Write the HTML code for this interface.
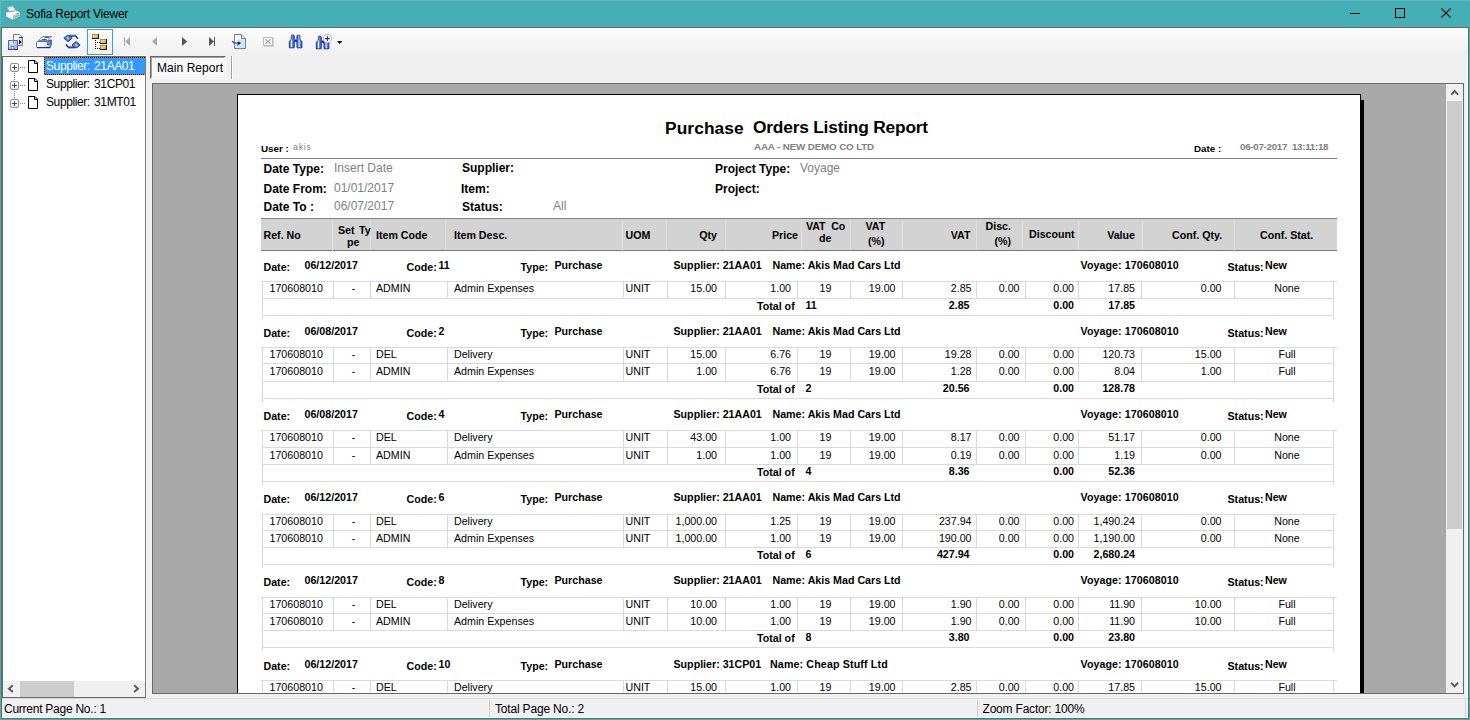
<!DOCTYPE html>
<html>
<head>
<meta charset="utf-8">
<title>Sofia Report Viewer</title>
<style>
*{box-sizing:border-box;margin:0;padding:0}
html,body{width:1470px;height:720px;overflow:hidden}
body{position:relative;background:#44b0b5;font-family:"Liberation Sans",sans-serif;font-size:12px;color:#000}
.abs{position:absolute}
.ui{font-size:12px;line-height:14px;white-space:nowrap}
#titletext{position:absolute;left:26px;top:7px;font-size:12px;line-height:14px;white-space:nowrap;letter-spacing:-0.23px}
#client{position:absolute;left:1px;top:27px;width:1468px;height:692px;background:#f0f0f0;border:1px solid #696969}
#toolbar{position:absolute;left:2px;top:28px;width:1466px;height:28px;background:linear-gradient(#ffffff 0px,#ffffff 1px,#fbfbfb 1px,#f8f8f8 10px,#f1f1f1 24px,#f0f0f0 28px)}
#tree{position:absolute;left:2px;top:56px;width:144px;height:642px;background:#fff;border:1px solid #696969;border-right-color:#7a7a7a}
.tr{position:absolute;left:44px;height:18px;line-height:17px;font-size:12px;white-space:nowrap;padding-left:2px}
#viewer{position:absolute;left:152px;top:83px;width:1312px;height:611px;background:#a9a9a9;border:1px solid #696969;overflow:hidden}
#paper{position:absolute;left:237px;top:94px;width:1124px;height:640px;background:#fff;border:1px solid #000}
#clip{position:absolute;left:0;top:0;width:1470px;height:693px;overflow:hidden}
.t{position:absolute;white-space:nowrap;font-size:10.67px;line-height:14px;height:14px}
.b{font-weight:bold}
.g{color:#808080}
.hl{position:absolute;height:1px;background:#d9d9d9}
.vl{position:absolute;width:1px;background:#d9d9d9}
.f12{font-size:12px}
.hs{position:absolute;top:221px;width:1px;height:29px;background:#e0e0e0}
#status{position:absolute;left:2px;top:698px;width:1466px;height:20px;background:#f0f0f0;font-size:12px}
#status span{position:absolute;top:4px;line-height:14px;white-space:nowrap}
</style>
</head>
<body>
<!-- title bar -->
<div id="titletext">Sofia Report Viewer</div>
<!--TITLEICONS-->
<div class="abs" style="left:0;top:0;width:1470px;height:1px;background:#5cb9bd"></div>
<div class="abs" style="left:0;top:0;width:1px;height:27px;background:#5cb9bd"></div>
<svg class="abs" style="left:4px;top:4px" width="18" height="18" viewBox="0 0 18 18">
 <polygon points="3.6,3.4 8.8,2.2 11.4,6.6 5.8,8" fill="#e9f1fb" stroke="#c8d4e0" stroke-width="0.5"/>
 <polygon points="2.4,8.8 5.4,8.0 11.6,6.6 15.6,8.6 15.6,12.2 9,15.6 2.4,12.6" fill="#e4e4e4"/>
 <polygon points="2.4,8.8 11.6,6.6 15.6,8.6 9,11.4" fill="#f6f6f6"/>
 <polygon points="9,11.4 15.6,8.6 15.6,12.2 9,15.6" fill="#c2c2c2"/><polygon points="9,13.6 15.6,10.6 15.6,11.4 9,14.4" fill="#a8a8a8"/>
 <polygon points="2.4,8.8 9,11.4 9,15.6 2.4,12.6" fill="#fbfbfb"/>
 <polygon points="4.5,7.6 10.8,6.2 11.6,7 5.8,8.6" fill="#9aa3ad"/>
 <rect x="12.6" y="8.8" width="1.8" height="1.1" fill="#3dbb2f"/>
</svg>
<svg class="abs" style="left:1340px;top:0" width="130" height="27" viewBox="0 0 130 27">
 <rect x="10" y="13" width="10" height="1" fill="#000"/>
 <rect x="55.5" y="8.5" width="9" height="9" fill="none" stroke="#000" stroke-width="1"/>
 <path d="M101.3 8.3 L110.7 17.7 M110.7 8.3 L101.3 17.7" stroke="#000" stroke-width="1.1" fill="none"/>
</svg>
<!--/TITLEICONS-->
<div id="client"></div>
<div id="toolbar"></div>
<div class="abs" style="left:1467px;top:54px;width:1px;height:664px;background:#fff"></div>
<!--TOOLICONS-->
<div class="abs" style="left:87px;top:29px;width:26px;height:26px;border:1px solid #3399ff;background:rgba(255,255,255,0.35)"></div>
<svg class="abs" style="left:0;top:28px" width="360" height="28" viewBox="0 28 360 28">
<defs>
 <linearGradient id="fg" x1="0" y1="0" x2="1" y2="1"><stop offset="0" stop-color="#ffe070"/><stop offset="0.5" stop-color="#ffc438"/><stop offset="1" stop-color="#f08c18"/></linearGradient>
 <linearGradient id="bl" x1="0" y1="0" x2="1" y2="0"><stop offset="0" stop-color="#3b6fc4"/><stop offset="0.28" stop-color="#5e9ad8"/><stop offset="0.45" stop-color="#eef5ff"/><stop offset="0.62" stop-color="#5a96d6"/><stop offset="1" stop-color="#2f66b8"/></linearGradient>
 <linearGradient id="fl" x1="0" y1="0" x2="1" y2="1"><stop offset="0" stop-color="#b9dcfb"/><stop offset="0.6" stop-color="#9cc4f4"/><stop offset="1" stop-color="#86aeea"/></linearGradient>
 <linearGradient id="pb" x1="0" y1="0" x2="1" y2="0"><stop offset="0" stop-color="#ffffff"/><stop offset="0.6" stop-color="#e6f0ff"/><stop offset="1" stop-color="#7fb0f0"/></linearGradient>
</defs>
<!-- 1: export -->
<path d="M13.5 34.5 H19.5 L22.5 37.5 V45.5 H13.5 Z" fill="#fff" stroke="#7a7a7a" stroke-width="1"/>
<rect x="19" y="38" width="3" height="7" fill="#bfe3ff"/>
<rect x="19" y="37" width="4" height="1" fill="#1b2f8f"/>
<path d="M19 39.5 L21.6 42 L19 44.5 Z" fill="#000"/>
<rect x="8.5" y="40.5" width="9" height="9" fill="url(#fl)" stroke="#4668d0" stroke-width="1"/>
<rect x="8" y="49" width="10" height="1" fill="#2a2a9a"/>
<rect x="10.6" y="41" width="4" height="3.6" fill="#f6f6f6"/><rect x="12.8" y="41" width="1.2" height="2.8" fill="#8a8a8a"/>
<rect x="11.4" y="46.6" width="2.4" height="2.6" fill="#fff" stroke="#555" stroke-width="0.6"/>
<!-- 2: print -->
<path d="M42.5 36.5 H52 L47.5 40.5 H38.5 Z" fill="#fff" stroke="#8a8a8a" stroke-width="1"/>
<rect x="44.5" y="37" width="4.5" height="1" fill="#3b46c2"/><rect x="42" y="39" width="4.8" height="1" fill="#3b46c2"/>
<path d="M47.6 40.5 L51.8 39.6 V45 L50 47.4 Z" fill="#2f55c8"/>
<rect x="36.5" y="41.5" width="14" height="6" rx="1" fill="url(#pb)" stroke="#3f6fd8" stroke-width="1"/>
<rect x="37" y="47" width="13.4" height="1.2" fill="#2626a0"/>
<rect x="47" y="42" width="2.6" height="1.6" fill="#18d818"/><rect x="47" y="43.6" width="2.6" height="1.4" fill="#f02020"/>
<!-- 3: refresh -->
<path d="M78 38.7 L75.6 35.9 H69" stroke="#25259a" stroke-width="1.5" fill="none"/>
<path d="M76.2 35 H68.6" stroke="#4f9be0" stroke-width="0.8" fill="none"/>
<path d="M63.9 38.2 L67.2 35.5 L70.4 36.2 L72 38.3 L68 41.7 Z" fill="#4a86cc" stroke="#25259a" stroke-width="0.9"/>
<path d="M66.2 37.6 L68 36.6 L69.4 38.4 L67.8 39.6 Z" fill="#a8cdf0"/>
<path d="M66 44.5 L68.4 47.3 H75" stroke="#25259a" stroke-width="1.5" fill="none"/>
<path d="M67.8 48.2 H75.4" stroke="#4f9be0" stroke-width="0.8" fill="none"/>
<path d="M80.1 45 L76.8 47.7 L73.6 47 L72 44.9 L76 41.5 Z" fill="#4a86cc" stroke="#25259a" stroke-width="0.9"/>
<path d="M77.8 45.6 L76 46.6 L74.6 44.8 L76.2 43.6 Z" fill="#a8cdf0"/>
<!-- 4: tree -->
<rect x="92" y="34" width="7" height="5" fill="#141414"/><rect x="92" y="34" width="6" height="1" fill="#8c8c8c"/><rect x="92" y="34" width="1" height="4" fill="#8c8c8c"/><rect x="93" y="35" width="5" height="3" fill="url(#fg)"/><rect x="100" y="39" width="7" height="5" fill="#141414"/><rect x="100" y="39" width="6" height="1" fill="#8c8c8c"/><rect x="100" y="39" width="1" height="4" fill="#8c8c8c"/><rect x="101" y="40" width="5" height="3" fill="url(#fg)"/><rect x="100" y="45" width="7" height="5" fill="#141414"/><rect x="100" y="45" width="6" height="1" fill="#8c8c8c"/><rect x="100" y="45" width="1" height="4" fill="#8c8c8c"/><rect x="101" y="46" width="5" height="3" fill="url(#fg)"/>
<rect x="95" y="40" width="1" height="1" fill="#000"/><rect x="95" y="42" width="1" height="1" fill="#000"/><rect x="95" y="44" width="1" height="1" fill="#000"/><rect x="95" y="46" width="1" height="1" fill="#000"/><rect x="95" y="48" width="1" height="1" fill="#000"/><rect x="97" y="42" width="1" height="1" fill="#000"/><rect x="97" y="48" width="1" height="1" fill="#000"/><rect x="99" y="42" width="1" height="1" fill="#000"/><rect x="99" y="48" width="1" height="1" fill="#000"/>
<!-- nav -->
<rect x="124" y="37" width="1" height="9" fill="#a9a9a9"/><path d="M130 37 V46 L125.2 41.5 Z" fill="#a9a9a9"/>
<path d="M157 37 V46 L152 41.5 Z" fill="#a9a9a9"/>
<path d="M182 37 V46 L187.2 41.5 Z" fill="#555"/>
<path d="M209 37 V46 L214 41.5 Z" fill="#555"/><rect x="214" y="37" width="1" height="9" fill="#555"/>
<!-- goto page -->
<path d="M234.5 34.5 H241.5 L245.5 38.5 V48.5 H234.5 Z" fill="#c9e9ff" stroke="#7d7d7d" stroke-width="1"/>
<path d="M235 35 H241 V39 H238 V42 H235 Z" fill="#fff"/>
<path d="M241.5 34.5 V38.5 H245.5" fill="#d9f0ff" stroke="#7d7d7d" stroke-width="1"/>
<path d="M232.2 41 C233.2 43.4 236 43.2 238 43" stroke="#4a4ab8" stroke-width="1.4" fill="none"/>
<path d="M237.4 40.6 L241.2 43 L237 46 L238 43.4 Z" fill="#1e1e90"/>
<path d="M236.5 42 L238.5 40.2 L240 42" fill="#fff" stroke="#9aa0e0" stroke-width="0.6"/>
<!-- disabled close -->
<rect x="263.5" y="37.5" width="9" height="8" fill="#f2f2f2" stroke="#bdbdbd" stroke-width="1"/>
<path d="M264 46.5 H273.5 V38" stroke="#d0d0d0" stroke-width="1" fill="none"/>
<path d="M265.4 39.4 L270.6 43.6 M270.6 39.4 L265.4 43.6" stroke="#a6a6a6" stroke-width="1.2"/>
<!-- binoculars 1 -->
<path d="M291.3 36.2 C291.3 34.6 294.3 34.6 294.3 36.2 V39.2 L294.2 47.8 H289.3 V41.4 L291.3 39.2 Z" fill="url(#bl)" stroke="#2424a0" stroke-width="0.9"/>
<path d="M296.9 36.2 C296.9 34.6 299.9 34.6 299.9 36.2 V39.2 L301.9 41.4 V47.8 H297 L296.9 39.2 Z" fill="url(#bl)" stroke="#2424a0" stroke-width="0.9"/>
<path d="M294.3 40.2 L295.6 39.2 L296.9 40.2 V42.8 L295.6 41.8 L294.3 42.8 Z" fill="#2a2aa8"/>
<!-- binoculars 2 -->
<path d="M318.3 37.2 C318.3 35.6 321.3 35.6 321.3 37.2 V40.2 L321.2 48.8 H316.3 V42.4 L318.3 40.2 Z" fill="url(#bl)" stroke="#2424a0" stroke-width="0.9"/>
<path d="M323.9 40.2 L324 48.8 H328.9 V42.4 L326.9 40.2 Z" fill="url(#bl)" stroke="#2424a0" stroke-width="0.9"/>
<path d="M321.3 41.2 L322.6 40.2 L323.9 41.2 V43.8 L322.6 42.8 L321.3 43.8 Z" fill="#2a2aa8"/>
<circle cx="327.4" cy="38.6" r="4.1" fill="#fff" stroke="#a4a4a4" stroke-width="0.9"/>
<path d="M325 38.6 H329.8 M327.4 36.2 V41" stroke="#2a2aa8" stroke-width="1.1"/>
<path d="M337 41 H342.4 L339.7 44 Z" fill="#000"/>
</svg>
<!--/TOOLICONS-->
<div class="abs" style="left:2px;top:55px;width:144px;height:1px;background:#fbfbfb"></div>
<div id="tree"></div>
<!--TREE--><div class="abs" style="left:10px;top:63px;width:9px;height:9px;border:1px solid #919191;border-radius:2px;background:linear-gradient(#fff,#fff 50%,#e3e3e3)"></div><div class="abs" style="left:12px;top:67px;width:5px;height:1px;background:#2a4a9e"></div><div class="abs" style="left:14px;top:65px;width:1px;height:5px;background:#2a4a9e"></div><div class="abs" style="left:20px;top:67px;width:1px;height:1px;background:#808080"></div><div class="abs" style="left:22px;top:67px;width:1px;height:1px;background:#808080"></div><div class="abs" style="left:24px;top:67px;width:1px;height:1px;background:#808080"></div><svg class="abs" style="left:27px;top:59px" width="13" height="15" viewBox="0 0 13 15"><path d="M1.5 1.5 H8 L10.5 4 V13.5 H1.5 Z" fill="#fff" stroke="#000" stroke-width="1"/><path d="M7.5 1.5 V4.5 H10.5" fill="none" stroke="#000" stroke-width="1"/></svg><div class="abs" style="left:44px;top:57px;width:101px;height:18px;background:#3399ff"></div><div class="abs" style="left:44px;top:57px;width:101px;height:1px;background:repeating-linear-gradient(90deg,#101010 0 1px,#e8800a 1px 2px)"></div><div class="abs" style="left:44px;top:74px;width:101px;height:1px;background:repeating-linear-gradient(90deg,#e8800a 0 1px,#101010 1px 2px)"></div><div class="abs" style="left:44px;top:57px;width:1px;height:18px;background:repeating-linear-gradient(180deg,#101010 0 1px,#e8800a 1px 2px)"></div><span class="abs ui" style="left:46px;top:59px;color:#fff;letter-spacing:-0.4px;word-spacing:1.4px">Supplier: 21AA01</span><div class="abs" style="left:10px;top:81px;width:9px;height:9px;border:1px solid #919191;border-radius:2px;background:linear-gradient(#fff,#fff 50%,#e3e3e3)"></div><div class="abs" style="left:12px;top:85px;width:5px;height:1px;background:#2a4a9e"></div><div class="abs" style="left:14px;top:83px;width:1px;height:5px;background:#2a4a9e"></div><div class="abs" style="left:20px;top:85px;width:1px;height:1px;background:#808080"></div><div class="abs" style="left:22px;top:85px;width:1px;height:1px;background:#808080"></div><div class="abs" style="left:24px;top:85px;width:1px;height:1px;background:#808080"></div><div class="abs" style="left:14px;top:73px;width:1px;height:1px;background:#808080"></div><div class="abs" style="left:14px;top:75px;width:1px;height:1px;background:#808080"></div><div class="abs" style="left:14px;top:77px;width:1px;height:1px;background:#808080"></div><div class="abs" style="left:14px;top:79px;width:1px;height:1px;background:#808080"></div><svg class="abs" style="left:27px;top:77px" width="13" height="15" viewBox="0 0 13 15"><path d="M1.5 1.5 H8 L10.5 4 V13.5 H1.5 Z" fill="#fff" stroke="#000" stroke-width="1"/><path d="M7.5 1.5 V4.5 H10.5" fill="none" stroke="#000" stroke-width="1"/></svg><span class="abs ui" style="left:46px;top:77px;letter-spacing:-0.4px;word-spacing:1.4px">Supplier: 31CP01</span><div class="abs" style="left:10px;top:99px;width:9px;height:9px;border:1px solid #919191;border-radius:2px;background:linear-gradient(#fff,#fff 50%,#e3e3e3)"></div><div class="abs" style="left:12px;top:103px;width:5px;height:1px;background:#2a4a9e"></div><div class="abs" style="left:14px;top:101px;width:1px;height:5px;background:#2a4a9e"></div><div class="abs" style="left:20px;top:103px;width:1px;height:1px;background:#808080"></div><div class="abs" style="left:22px;top:103px;width:1px;height:1px;background:#808080"></div><div class="abs" style="left:24px;top:103px;width:1px;height:1px;background:#808080"></div><div class="abs" style="left:14px;top:91px;width:1px;height:1px;background:#808080"></div><div class="abs" style="left:14px;top:93px;width:1px;height:1px;background:#808080"></div><div class="abs" style="left:14px;top:95px;width:1px;height:1px;background:#808080"></div><div class="abs" style="left:14px;top:97px;width:1px;height:1px;background:#808080"></div><svg class="abs" style="left:27px;top:95px" width="13" height="15" viewBox="0 0 13 15"><path d="M1.5 1.5 H8 L10.5 4 V13.5 H1.5 Z" fill="#fff" stroke="#000" stroke-width="1"/><path d="M7.5 1.5 V4.5 H10.5" fill="none" stroke="#000" stroke-width="1"/></svg><span class="abs ui" style="left:46px;top:95px;letter-spacing:-0.4px;word-spacing:1.4px">Supplier: 31MT01</span>
<div class="abs" style="left:3px;top:681px;width:142px;height:16px;background:#f0f0f0"></div>
<div class="abs" style="left:20px;top:681px;width:54px;height:16px;background:#cdcdcd"></div>
<svg class="abs" style="left:3px;top:681px" width="142" height="16" viewBox="0 0 142 16"><path d="M9.8 4.3 L6 7.7 L9.8 11.1" stroke="#5c5c5c" stroke-width="2" fill="none"/><path d="M131.2 4.3 L135 7.7 L131.2 11.1" stroke="#5c5c5c" stroke-width="2" fill="none"/></svg>
<!--/TREE-->
<!--TAB-->
<div class="abs" style="left:150px;top:56px;width:76px;height:23px;border:1px solid;border-color:#696969 #fff #fff #696969;background-color:#f8f8f8"></div>
<div class="abs" style="left:151px;top:57px;width:74px;height:21px;border:1px solid;border-color:#a0a0a0 #f0f0f0 #f0f0f0 #a0a0a0"></div>
<span class="abs ui" style="left:157px;top:61px;letter-spacing:0.06px">Main Report</span>
<div class="abs" style="left:231px;top:56px;width:1px;height:23px;background:#a0a0a0"></div>
<div class="abs" style="left:232px;top:56px;width:1px;height:23px;background:#fff"></div>
<!--/TAB-->
<div id="viewer"></div>
<div id="clip">
<div id="paper"></div>
<div class="abs" style="left:1361px;top:100px;width:3px;height:640px;background:#000"></div>
<!--REPORTHEAD-->
<!-- report head -->
<span class="t b" style="left:665px;top:117px;font-size:17.33px;line-height:22px;height:22px;letter-spacing:0.1px" id="ttl1">Purchase</span>
<span class="t b" style="left:753px;top:116px;font-size:17.33px;line-height:22px;height:22px;letter-spacing:-0.2px" id="ttl2">Orders Listing Report</span>
<span class="t b g" style="left:754px;top:140px;font-size:9.8px;letter-spacing:-0.14px" id="co">AAA - NEW DEMO CO LTD</span>
<span class="t b" style="left:261px;top:142px;font-size:9.8px;letter-spacing:0px" id="usr">User :</span>
<span class="t g" style="left:293px;top:140px;font-size:8.8px;letter-spacing:0.75px" id="akis">akis</span>
<span class="t b" style="left:1194px;top:142px;font-size:9.8px;letter-spacing:0px" id="dtl">Date :</span>
<span class="t b g" style="left:1240px;top:140px;font-size:9.8px;letter-spacing:-0.3px" id="dtv">06-07-2017&nbsp;&nbsp;13:11:18</span>
<div class="abs" style="left:261px;top:158px;width:1076px;height:1px;background:#808080"></div>

<span class="t b f12" style="left:263.5px;top:162px" id="f1">Date Type:</span>
<span class="t g f12" style="left:334px;top:161px" id="f1v">Insert Date</span>
<span class="t b f12" style="left:263.5px;top:182px" id="f2">Date From:</span>
<span class="t g f12" style="left:334px;top:181px" id="f2v">01/01/2017</span>
<span class="t b f12" style="left:263.5px;top:200px" id="f3">Date To :</span>
<span class="t g f12" style="left:334px;top:199px" id="f3v">06/07/2017</span>
<span class="t b f12" style="left:462px;top:161px" id="f4">Supplier:</span>
<span class="t b f12" style="left:461px;top:182px" id="f5">Item:</span>
<span class="t b f12" style="left:462px;top:200px" id="f6">Status:</span>
<span class="t g f12" style="left:553px;top:199px" id="f6v">All</span>
<span class="t b f12" style="left:715px;top:162px" id="f7">Project Type:</span>
<span class="t g f12" style="left:800px;top:161px" id="f7v">Voyage</span>
<span class="t b f12" style="left:715px;top:182px" id="f8">Project:</span>

<!-- column header -->
<div class="abs" style="left:261px;top:218px;width:1076px;height:33px;background:#d3d3d3;border-top:1px solid #808080;border-bottom:1px solid #787878"></div>
<div class="hs" style="left:332px;height:31px"></div><div class="hs" style="left:370px"></div><div class="hs" style="left:445px"></div>
<div class="hs" style="left:622px;height:31px"></div><div class="hs" style="left:666px"></div><div class="hs" style="left:725px"></div>
<div class="hs" style="left:801px"></div><div class="hs" style="left:850px"></div><div class="hs" style="left:902px"></div>
<div class="hs" style="left:976px"></div><div class="hs" style="left:1022px"></div><div class="hs" style="left:1078px"></div>
<div class="hs" style="left:1142px"></div><div class="hs" style="left:1234px;height:31px"></div>
<span class="t b" style="left:263.5px;top:228px">Ref. No</span>
<span class="t b" style="left:338px;top:223px">Set<span style="margin-left:4.5px">Ty</span></span>
<span class="t b" style="left:347px;top:235px">pe</span>
<span class="t b" style="left:376px;top:228px">Item Code</span>
<span class="t b" style="left:454px;top:228px">Item Desc.</span>
<span class="t b" style="left:625.5px;top:228px">UOM</span>
<span class="t b" style="right:753px;top:228px">Qty</span>
<span class="t b" style="right:672px;top:228px">Price</span>
<span class="t b" style="left:806px;top:219px;width:39.2px;overflow:hidden;letter-spacing:-0.08px">VAT&nbsp; Code</span>
<span class="t b" style="left:819px;top:231px">de</span>
<span class="t b" style="left:865.5px;top:219px">VAT</span>
<span class="t b" style="left:868px;top:234px">(%)</span>
<span class="t b" style="right:499.5px;top:228px">VAT</span>
<span class="t b" style="right:459px;top:219px">Disc.</span>
<span class="t b" style="right:459px;top:234px">(%)</span>
<span class="t b" style="left:1029px;top:227px">Discount</span>
<span class="t b" style="right:335px;top:228px">Value</span>
<span class="t b" style="left:1172px;top:228px">Conf. Qty.</span>
<span class="t b" style="left:1260px;top:228px">Conf. Stat.</span>
<!--/REPORTHEAD-->
<span class="t b" style="top:260px;left:263.5px;">Date:</span>
<span class="t b" style="top:258px;left:304.5px;">06/12/2017</span>
<span class="t b" style="top:260px;left:406.5px;">Code:</span>
<span class="t b" style="top:258px;left:438.5px;">11</span>
<span class="t b" style="top:260px;left:520.5px;">Type:</span>
<span class="t b" style="top:258px;left:554.5px;">Purchase</span>
<span class="t b" style="top:258px;left:673.5px;">Supplier: 21AA01</span>
<span class="t b" style="top:258px;left:772.5px;">Name: Akis Mad Cars Ltd</span>
<span class="t b" style="top:258px;left:1080.5px;letter-spacing:0.08px;">Voyage: 170608010</span>
<span class="t b" style="top:260px;left:1227.5px;">Status:</span>
<span class="t b" style="top:258px;left:1265px;">New</span>
<div class="hl" style="top:281px;left:261px;width:1076px"></div>
<div class="hl" style="top:298px;left:262px;width:1072px"></div>
<div class="hl" style="top:315px;left:262px;width:1072px"></div>
<div class="vl" style="left:262px;top:281px;height:38px"></div>
<div class="vl" style="left:1333px;top:281px;height:38px"></div>
<div class="vl" style="left:333px;top:281px;height:17px"></div>
<div class="vl" style="left:370px;top:281px;height:17px"></div>
<div class="vl" style="left:447px;top:281px;height:17px"></div>
<div class="vl" style="left:623px;top:281px;height:17px"></div>
<div class="vl" style="left:667px;top:281px;height:17px"></div>
<div class="vl" style="left:725px;top:281px;height:17px"></div>
<div class="vl" style="left:797px;top:281px;height:17px"></div>
<div class="vl" style="left:850px;top:281px;height:17px"></div>
<div class="vl" style="left:902px;top:281px;height:17px"></div>
<div class="vl" style="left:976px;top:281px;height:17px"></div>
<div class="vl" style="left:1025px;top:281px;height:17px"></div>
<div class="vl" style="left:1078px;top:281px;height:17px"></div>
<div class="vl" style="left:1141px;top:281px;height:17px"></div>
<div class="vl" style="left:1234px;top:281px;height:17px"></div>
<span class="t " style="top:281px;left:269.5px;">170608010</span>
<span class="t " style="top:281px;left:253.5px;width:200px;text-align:center;">-</span>
<span class="t " style="top:281px;left:376px;">ADMIN</span>
<span class="t " style="top:281px;left:454px;">Admin Expenses</span>
<span class="t " style="top:281px;left:625.5px;">UNIT</span>
<span class="t " style="top:281px;right:753px;">15.00</span>
<span class="t " style="top:281px;right:679px;">1.00</span>
<span class="t " style="top:281px;left:725.5px;width:200px;text-align:center;">19</span>
<span class="t " style="top:281px;right:574.5px;">19.00</span>
<span class="t " style="top:281px;right:498.5px;">2.85</span>
<span class="t " style="top:281px;right:450.5px;">0.00</span>
<span class="t " style="top:281px;right:396px;">0.00</span>
<span class="t " style="top:281px;right:335px;">17.85</span>
<span class="t " style="top:281px;right:248.5px;">0.00</span>
<span class="t " style="top:281px;left:1187px;width:200px;text-align:center;">None</span>
<span class="t b" style="top:299px;left:757px;">Total of</span>
<span class="t b" style="top:298px;left:805.5px;">11</span>
<span class="t b" style="top:298px;right:500.5px;">2.85</span>
<span class="t b" style="top:298px;right:396px;">0.00</span>
<span class="t b" style="top:298px;right:335px;">17.85</span>
<span class="t b" style="top:326px;left:263.5px;">Date:</span>
<span class="t b" style="top:324px;left:304.5px;">06/08/2017</span>
<span class="t b" style="top:326px;left:406.5px;">Code:</span>
<span class="t b" style="top:324px;left:438.5px;">2</span>
<span class="t b" style="top:326px;left:520.5px;">Type:</span>
<span class="t b" style="top:324px;left:554.5px;">Purchase</span>
<span class="t b" style="top:324px;left:673.5px;">Supplier: 21AA01</span>
<span class="t b" style="top:324px;left:772.5px;">Name: Akis Mad Cars Ltd</span>
<span class="t b" style="top:324px;left:1080.5px;letter-spacing:0.08px;">Voyage: 170608010</span>
<span class="t b" style="top:326px;left:1227.5px;">Status:</span>
<span class="t b" style="top:324px;left:1265px;">New</span>
<div class="hl" style="top:347px;left:261px;width:1076px"></div>
<div class="hl" style="top:363px;left:262px;width:1072px"></div>
<div class="hl" style="top:381px;left:262px;width:1072px"></div>
<div class="hl" style="top:398px;left:262px;width:1072px"></div>
<div class="vl" style="left:262px;top:347px;height:55px"></div>
<div class="vl" style="left:1333px;top:347px;height:55px"></div>
<div class="vl" style="left:333px;top:347px;height:34px"></div>
<div class="vl" style="left:370px;top:347px;height:34px"></div>
<div class="vl" style="left:447px;top:347px;height:34px"></div>
<div class="vl" style="left:623px;top:347px;height:34px"></div>
<div class="vl" style="left:667px;top:347px;height:34px"></div>
<div class="vl" style="left:725px;top:347px;height:34px"></div>
<div class="vl" style="left:797px;top:347px;height:34px"></div>
<div class="vl" style="left:850px;top:347px;height:34px"></div>
<div class="vl" style="left:902px;top:347px;height:34px"></div>
<div class="vl" style="left:976px;top:347px;height:34px"></div>
<div class="vl" style="left:1025px;top:347px;height:34px"></div>
<div class="vl" style="left:1078px;top:347px;height:34px"></div>
<div class="vl" style="left:1141px;top:347px;height:34px"></div>
<div class="vl" style="left:1234px;top:347px;height:34px"></div>
<span class="t " style="top:347px;left:269.5px;">170608010</span>
<span class="t " style="top:347px;left:253.5px;width:200px;text-align:center;">-</span>
<span class="t " style="top:347px;left:376px;">DEL</span>
<span class="t " style="top:347px;left:454px;">Delivery</span>
<span class="t " style="top:347px;left:625.5px;">UNIT</span>
<span class="t " style="top:347px;right:753px;">15.00</span>
<span class="t " style="top:347px;right:679px;">6.76</span>
<span class="t " style="top:347px;left:725.5px;width:200px;text-align:center;">19</span>
<span class="t " style="top:347px;right:574.5px;">19.00</span>
<span class="t " style="top:347px;right:498.5px;">19.28</span>
<span class="t " style="top:347px;right:450.5px;">0.00</span>
<span class="t " style="top:347px;right:396px;">0.00</span>
<span class="t " style="top:347px;right:335px;">120.73</span>
<span class="t " style="top:347px;right:248.5px;">15.00</span>
<span class="t " style="top:347px;left:1187px;width:200px;text-align:center;">Full</span>
<span class="t " style="top:364px;left:269.5px;">170608010</span>
<span class="t " style="top:364px;left:253.5px;width:200px;text-align:center;">-</span>
<span class="t " style="top:364px;left:376px;">ADMIN</span>
<span class="t " style="top:364px;left:454px;">Admin Expenses</span>
<span class="t " style="top:364px;left:625.5px;">UNIT</span>
<span class="t " style="top:364px;right:753px;">1.00</span>
<span class="t " style="top:364px;right:679px;">6.76</span>
<span class="t " style="top:364px;left:725.5px;width:200px;text-align:center;">19</span>
<span class="t " style="top:364px;right:574.5px;">19.00</span>
<span class="t " style="top:364px;right:498.5px;">1.28</span>
<span class="t " style="top:364px;right:450.5px;">0.00</span>
<span class="t " style="top:364px;right:396px;">0.00</span>
<span class="t " style="top:364px;right:335px;">8.04</span>
<span class="t " style="top:364px;right:248.5px;">1.00</span>
<span class="t " style="top:364px;left:1187px;width:200px;text-align:center;">Full</span>
<span class="t b" style="top:382px;left:757px;">Total of</span>
<span class="t b" style="top:381px;left:805.5px;">2</span>
<span class="t b" style="top:381px;right:500.5px;">20.56</span>
<span class="t b" style="top:381px;right:396px;">0.00</span>
<span class="t b" style="top:381px;right:335px;">128.78</span>
<span class="t b" style="top:409px;left:263.5px;">Date:</span>
<span class="t b" style="top:407px;left:304.5px;">06/08/2017</span>
<span class="t b" style="top:409px;left:406.5px;">Code:</span>
<span class="t b" style="top:407px;left:438.5px;">4</span>
<span class="t b" style="top:409px;left:520.5px;">Type:</span>
<span class="t b" style="top:407px;left:554.5px;">Purchase</span>
<span class="t b" style="top:407px;left:673.5px;">Supplier: 21AA01</span>
<span class="t b" style="top:407px;left:772.5px;">Name: Akis Mad Cars Ltd</span>
<span class="t b" style="top:407px;left:1080.5px;letter-spacing:0.08px;">Voyage: 170608010</span>
<span class="t b" style="top:409px;left:1227.5px;">Status:</span>
<span class="t b" style="top:407px;left:1265px;">New</span>
<div class="hl" style="top:430px;left:261px;width:1076px"></div>
<div class="hl" style="top:447px;left:262px;width:1072px"></div>
<div class="hl" style="top:464px;left:262px;width:1072px"></div>
<div class="hl" style="top:481px;left:262px;width:1072px"></div>
<div class="vl" style="left:262px;top:430px;height:55px"></div>
<div class="vl" style="left:1333px;top:430px;height:55px"></div>
<div class="vl" style="left:333px;top:430px;height:34px"></div>
<div class="vl" style="left:370px;top:430px;height:34px"></div>
<div class="vl" style="left:447px;top:430px;height:34px"></div>
<div class="vl" style="left:623px;top:430px;height:34px"></div>
<div class="vl" style="left:667px;top:430px;height:34px"></div>
<div class="vl" style="left:725px;top:430px;height:34px"></div>
<div class="vl" style="left:797px;top:430px;height:34px"></div>
<div class="vl" style="left:850px;top:430px;height:34px"></div>
<div class="vl" style="left:902px;top:430px;height:34px"></div>
<div class="vl" style="left:976px;top:430px;height:34px"></div>
<div class="vl" style="left:1025px;top:430px;height:34px"></div>
<div class="vl" style="left:1078px;top:430px;height:34px"></div>
<div class="vl" style="left:1141px;top:430px;height:34px"></div>
<div class="vl" style="left:1234px;top:430px;height:34px"></div>
<span class="t " style="top:430px;left:269.5px;">170608010</span>
<span class="t " style="top:430px;left:253.5px;width:200px;text-align:center;">-</span>
<span class="t " style="top:430px;left:376px;">DEL</span>
<span class="t " style="top:430px;left:454px;">Delivery</span>
<span class="t " style="top:430px;left:625.5px;">UNIT</span>
<span class="t " style="top:430px;right:753px;">43.00</span>
<span class="t " style="top:430px;right:679px;">1.00</span>
<span class="t " style="top:430px;left:725.5px;width:200px;text-align:center;">19</span>
<span class="t " style="top:430px;right:574.5px;">19.00</span>
<span class="t " style="top:430px;right:498.5px;">8.17</span>
<span class="t " style="top:430px;right:450.5px;">0.00</span>
<span class="t " style="top:430px;right:396px;">0.00</span>
<span class="t " style="top:430px;right:335px;">51.17</span>
<span class="t " style="top:430px;right:248.5px;">0.00</span>
<span class="t " style="top:430px;left:1187px;width:200px;text-align:center;">None</span>
<span class="t " style="top:448px;left:269.5px;">170608010</span>
<span class="t " style="top:448px;left:253.5px;width:200px;text-align:center;">-</span>
<span class="t " style="top:448px;left:376px;">ADMIN</span>
<span class="t " style="top:448px;left:454px;">Admin Expenses</span>
<span class="t " style="top:448px;left:625.5px;">UNIT</span>
<span class="t " style="top:448px;right:753px;">1.00</span>
<span class="t " style="top:448px;right:679px;">1.00</span>
<span class="t " style="top:448px;left:725.5px;width:200px;text-align:center;">19</span>
<span class="t " style="top:448px;right:574.5px;">19.00</span>
<span class="t " style="top:448px;right:498.5px;">0.19</span>
<span class="t " style="top:448px;right:450.5px;">0.00</span>
<span class="t " style="top:448px;right:396px;">0.00</span>
<span class="t " style="top:448px;right:335px;">1.19</span>
<span class="t " style="top:448px;right:248.5px;">0.00</span>
<span class="t " style="top:448px;left:1187px;width:200px;text-align:center;">None</span>
<span class="t b" style="top:465px;left:757px;">Total of</span>
<span class="t b" style="top:464px;left:805.5px;">4</span>
<span class="t b" style="top:464px;right:500.5px;">8.36</span>
<span class="t b" style="top:464px;right:396px;">0.00</span>
<span class="t b" style="top:464px;right:335px;">52.36</span>
<span class="t b" style="top:492px;left:263.5px;">Date:</span>
<span class="t b" style="top:490px;left:304.5px;">06/12/2017</span>
<span class="t b" style="top:492px;left:406.5px;">Code:</span>
<span class="t b" style="top:490px;left:438.5px;">6</span>
<span class="t b" style="top:492px;left:520.5px;">Type:</span>
<span class="t b" style="top:490px;left:554.5px;">Purchase</span>
<span class="t b" style="top:490px;left:673.5px;">Supplier: 21AA01</span>
<span class="t b" style="top:490px;left:772.5px;">Name: Akis Mad Cars Ltd</span>
<span class="t b" style="top:490px;left:1080.5px;letter-spacing:0.08px;">Voyage: 170608010</span>
<span class="t b" style="top:492px;left:1227.5px;">Status:</span>
<span class="t b" style="top:490px;left:1265px;">New</span>
<div class="hl" style="top:514px;left:261px;width:1076px"></div>
<div class="hl" style="top:530px;left:262px;width:1072px"></div>
<div class="hl" style="top:547px;left:262px;width:1072px"></div>
<div class="hl" style="top:564px;left:262px;width:1072px"></div>
<div class="vl" style="left:262px;top:514px;height:54px"></div>
<div class="vl" style="left:1333px;top:514px;height:54px"></div>
<div class="vl" style="left:333px;top:514px;height:33px"></div>
<div class="vl" style="left:370px;top:514px;height:33px"></div>
<div class="vl" style="left:447px;top:514px;height:33px"></div>
<div class="vl" style="left:623px;top:514px;height:33px"></div>
<div class="vl" style="left:667px;top:514px;height:33px"></div>
<div class="vl" style="left:725px;top:514px;height:33px"></div>
<div class="vl" style="left:797px;top:514px;height:33px"></div>
<div class="vl" style="left:850px;top:514px;height:33px"></div>
<div class="vl" style="left:902px;top:514px;height:33px"></div>
<div class="vl" style="left:976px;top:514px;height:33px"></div>
<div class="vl" style="left:1025px;top:514px;height:33px"></div>
<div class="vl" style="left:1078px;top:514px;height:33px"></div>
<div class="vl" style="left:1141px;top:514px;height:33px"></div>
<div class="vl" style="left:1234px;top:514px;height:33px"></div>
<span class="t " style="top:514px;left:269.5px;">170608010</span>
<span class="t " style="top:514px;left:253.5px;width:200px;text-align:center;">-</span>
<span class="t " style="top:514px;left:376px;">DEL</span>
<span class="t " style="top:514px;left:454px;">Delivery</span>
<span class="t " style="top:514px;left:625.5px;">UNIT</span>
<span class="t " style="top:514px;right:753px;">1,000.00</span>
<span class="t " style="top:514px;right:679px;">1.25</span>
<span class="t " style="top:514px;left:725.5px;width:200px;text-align:center;">19</span>
<span class="t " style="top:514px;right:574.5px;">19.00</span>
<span class="t " style="top:514px;right:498.5px;">237.94</span>
<span class="t " style="top:514px;right:450.5px;">0.00</span>
<span class="t " style="top:514px;right:396px;">0.00</span>
<span class="t " style="top:514px;right:335px;">1,490.24</span>
<span class="t " style="top:514px;right:248.5px;">0.00</span>
<span class="t " style="top:514px;left:1187px;width:200px;text-align:center;">None</span>
<span class="t " style="top:531px;left:269.5px;">170608010</span>
<span class="t " style="top:531px;left:253.5px;width:200px;text-align:center;">-</span>
<span class="t " style="top:531px;left:376px;">ADMIN</span>
<span class="t " style="top:531px;left:454px;">Admin Expenses</span>
<span class="t " style="top:531px;left:625.5px;">UNIT</span>
<span class="t " style="top:531px;right:753px;">1,000.00</span>
<span class="t " style="top:531px;right:679px;">1.00</span>
<span class="t " style="top:531px;left:725.5px;width:200px;text-align:center;">19</span>
<span class="t " style="top:531px;right:574.5px;">19.00</span>
<span class="t " style="top:531px;right:498.5px;">190.00</span>
<span class="t " style="top:531px;right:450.5px;">0.00</span>
<span class="t " style="top:531px;right:396px;">0.00</span>
<span class="t " style="top:531px;right:335px;">1,190.00</span>
<span class="t " style="top:531px;right:248.5px;">0.00</span>
<span class="t " style="top:531px;left:1187px;width:200px;text-align:center;">None</span>
<span class="t b" style="top:548px;left:757px;">Total of</span>
<span class="t b" style="top:547px;left:805.5px;">6</span>
<span class="t b" style="top:547px;right:500.5px;">427.94</span>
<span class="t b" style="top:547px;right:396px;">0.00</span>
<span class="t b" style="top:547px;right:335px;">2,680.24</span>
<span class="t b" style="top:575px;left:263.5px;">Date:</span>
<span class="t b" style="top:573px;left:304.5px;">06/12/2017</span>
<span class="t b" style="top:575px;left:406.5px;">Code:</span>
<span class="t b" style="top:573px;left:438.5px;">8</span>
<span class="t b" style="top:575px;left:520.5px;">Type:</span>
<span class="t b" style="top:573px;left:554.5px;">Purchase</span>
<span class="t b" style="top:573px;left:673.5px;">Supplier: 21AA01</span>
<span class="t b" style="top:573px;left:772.5px;">Name: Akis Mad Cars Ltd</span>
<span class="t b" style="top:573px;left:1080.5px;letter-spacing:0.08px;">Voyage: 170608010</span>
<span class="t b" style="top:575px;left:1227.5px;">Status:</span>
<span class="t b" style="top:573px;left:1265px;">New</span>
<div class="hl" style="top:597px;left:261px;width:1076px"></div>
<div class="hl" style="top:613px;left:262px;width:1072px"></div>
<div class="hl" style="top:630px;left:262px;width:1072px"></div>
<div class="hl" style="top:647px;left:262px;width:1072px"></div>
<div class="vl" style="left:262px;top:597px;height:54px"></div>
<div class="vl" style="left:1333px;top:597px;height:54px"></div>
<div class="vl" style="left:333px;top:597px;height:33px"></div>
<div class="vl" style="left:370px;top:597px;height:33px"></div>
<div class="vl" style="left:447px;top:597px;height:33px"></div>
<div class="vl" style="left:623px;top:597px;height:33px"></div>
<div class="vl" style="left:667px;top:597px;height:33px"></div>
<div class="vl" style="left:725px;top:597px;height:33px"></div>
<div class="vl" style="left:797px;top:597px;height:33px"></div>
<div class="vl" style="left:850px;top:597px;height:33px"></div>
<div class="vl" style="left:902px;top:597px;height:33px"></div>
<div class="vl" style="left:976px;top:597px;height:33px"></div>
<div class="vl" style="left:1025px;top:597px;height:33px"></div>
<div class="vl" style="left:1078px;top:597px;height:33px"></div>
<div class="vl" style="left:1141px;top:597px;height:33px"></div>
<div class="vl" style="left:1234px;top:597px;height:33px"></div>
<span class="t " style="top:597px;left:269.5px;">170608010</span>
<span class="t " style="top:597px;left:253.5px;width:200px;text-align:center;">-</span>
<span class="t " style="top:597px;left:376px;">DEL</span>
<span class="t " style="top:597px;left:454px;">Delivery</span>
<span class="t " style="top:597px;left:625.5px;">UNIT</span>
<span class="t " style="top:597px;right:753px;">10.00</span>
<span class="t " style="top:597px;right:679px;">1.00</span>
<span class="t " style="top:597px;left:725.5px;width:200px;text-align:center;">19</span>
<span class="t " style="top:597px;right:574.5px;">19.00</span>
<span class="t " style="top:597px;right:498.5px;">1.90</span>
<span class="t " style="top:597px;right:450.5px;">0.00</span>
<span class="t " style="top:597px;right:396px;">0.00</span>
<span class="t " style="top:597px;right:335px;">11.90</span>
<span class="t " style="top:597px;right:248.5px;">10.00</span>
<span class="t " style="top:597px;left:1187px;width:200px;text-align:center;">Full</span>
<span class="t " style="top:614px;left:269.5px;">170608010</span>
<span class="t " style="top:614px;left:253.5px;width:200px;text-align:center;">-</span>
<span class="t " style="top:614px;left:376px;">ADMIN</span>
<span class="t " style="top:614px;left:454px;">Admin Expenses</span>
<span class="t " style="top:614px;left:625.5px;">UNIT</span>
<span class="t " style="top:614px;right:753px;">10.00</span>
<span class="t " style="top:614px;right:679px;">1.00</span>
<span class="t " style="top:614px;left:725.5px;width:200px;text-align:center;">19</span>
<span class="t " style="top:614px;right:574.5px;">19.00</span>
<span class="t " style="top:614px;right:498.5px;">1.90</span>
<span class="t " style="top:614px;right:450.5px;">0.00</span>
<span class="t " style="top:614px;right:396px;">0.00</span>
<span class="t " style="top:614px;right:335px;">11.90</span>
<span class="t " style="top:614px;right:248.5px;">10.00</span>
<span class="t " style="top:614px;left:1187px;width:200px;text-align:center;">Full</span>
<span class="t b" style="top:631px;left:757px;">Total of</span>
<span class="t b" style="top:630px;left:805.5px;">8</span>
<span class="t b" style="top:630px;right:500.5px;">3.80</span>
<span class="t b" style="top:630px;right:396px;">0.00</span>
<span class="t b" style="top:630px;right:335px;">23.80</span>
<span class="t b" style="top:659px;left:263.5px;">Date:</span>
<span class="t b" style="top:657px;left:304.5px;">06/12/2017</span>
<span class="t b" style="top:659px;left:406.5px;">Code:</span>
<span class="t b" style="top:657px;left:438.5px;">10</span>
<span class="t b" style="top:659px;left:520.5px;">Type:</span>
<span class="t b" style="top:657px;left:554.5px;">Purchase</span>
<span class="t b" style="top:657px;left:673.5px;">Supplier: 31CP01</span>
<span class="t b" style="top:657px;left:770px;letter-spacing:0.14px;">Name: Cheap Stuff Ltd</span>
<span class="t b" style="top:657px;left:1080.5px;letter-spacing:0.08px;">Voyage: 170608010</span>
<span class="t b" style="top:659px;left:1227.5px;">Status:</span>
<span class="t b" style="top:657px;left:1265px;">New</span>
<div class="hl" style="top:680px;left:261px;width:1076px"></div>
<div class="hl" style="top:696px;left:262px;width:1072px"></div>
<div class="hl" style="top:713px;left:262px;width:1072px"></div>
<div class="hl" style="top:730px;left:262px;width:1072px"></div>
<div class="vl" style="left:262px;top:680px;height:54px"></div>
<div class="vl" style="left:1333px;top:680px;height:54px"></div>
<div class="vl" style="left:333px;top:680px;height:33px"></div>
<div class="vl" style="left:370px;top:680px;height:33px"></div>
<div class="vl" style="left:447px;top:680px;height:33px"></div>
<div class="vl" style="left:623px;top:680px;height:33px"></div>
<div class="vl" style="left:667px;top:680px;height:33px"></div>
<div class="vl" style="left:725px;top:680px;height:33px"></div>
<div class="vl" style="left:797px;top:680px;height:33px"></div>
<div class="vl" style="left:850px;top:680px;height:33px"></div>
<div class="vl" style="left:902px;top:680px;height:33px"></div>
<div class="vl" style="left:976px;top:680px;height:33px"></div>
<div class="vl" style="left:1025px;top:680px;height:33px"></div>
<div class="vl" style="left:1078px;top:680px;height:33px"></div>
<div class="vl" style="left:1141px;top:680px;height:33px"></div>
<div class="vl" style="left:1234px;top:680px;height:33px"></div>
<span class="t " style="top:680px;left:269.5px;">170608010</span>
<span class="t " style="top:680px;left:253.5px;width:200px;text-align:center;">-</span>
<span class="t " style="top:680px;left:376px;">DEL</span>
<span class="t " style="top:680px;left:454px;">Delivery</span>
<span class="t " style="top:680px;left:625.5px;">UNIT</span>
<span class="t " style="top:680px;right:753px;">15.00</span>
<span class="t " style="top:680px;right:679px;">1.00</span>
<span class="t " style="top:680px;left:725.5px;width:200px;text-align:center;">19</span>
<span class="t " style="top:680px;right:574.5px;">19.00</span>
<span class="t " style="top:680px;right:498.5px;">2.85</span>
<span class="t " style="top:680px;right:450.5px;">0.00</span>
<span class="t " style="top:680px;right:396px;">0.00</span>
<span class="t " style="top:680px;right:335px;">17.85</span>
<span class="t " style="top:680px;right:248.5px;">15.00</span>
<span class="t " style="top:680px;left:1187px;width:200px;text-align:center;">Full</span>
<span class="t " style="top:697px;left:269.5px;">170608010</span>
<span class="t " style="top:697px;left:253.5px;width:200px;text-align:center;">-</span>
<span class="t " style="top:697px;left:376px;">ADMIN</span>
<span class="t " style="top:697px;left:454px;">Admin Expenses</span>
<span class="t " style="top:697px;left:625.5px;">UNIT</span>
<span class="t " style="top:697px;right:753px;">1.00</span>
<span class="t " style="top:697px;right:679px;">1.00</span>
<span class="t " style="top:697px;left:725.5px;width:200px;text-align:center;">19</span>
<span class="t " style="top:697px;right:574.5px;">19.00</span>
<span class="t " style="top:697px;right:498.5px;">0.19</span>
<span class="t " style="top:697px;right:450.5px;">0.00</span>
<span class="t " style="top:697px;right:396px;">0.00</span>
<span class="t " style="top:697px;right:335px;">1.19</span>
<span class="t " style="top:697px;right:248.5px;">1.00</span>
<span class="t " style="top:697px;left:1187px;width:200px;text-align:center;">Full</span>
<span class="t b" style="top:714px;left:757px;">Total of</span>
<span class="t b" style="top:713px;left:805.5px;">10</span>
<span class="t b" style="top:713px;right:500.5px;">3.04</span>
<span class="t b" style="top:713px;right:396px;">0.00</span>
<span class="t b" style="top:713px;right:335px;">19.04</span>
</div>
<!--SCROLL-->
<div class="abs" style="left:1446px;top:84px;width:17px;height:609px;background:#f0f0f0"></div>
<div class="abs" style="left:1447px;top:101px;width:15px;height:428px;background:#cdcdcd"></div>
<svg class="abs" style="left:1446px;top:84px" width="17" height="609" viewBox="0 0 17 609"><path d="M5.2 10.6 L8.6 7 L12 10.6" stroke="#5c5c5c" stroke-width="2" fill="none"/><path d="M5.2 598.8 L8.6 602.4 L12 598.8" stroke="#5c5c5c" stroke-width="2" fill="none"/></svg>
<!--/SCROLL-->
<div id="status">
<div class="abs" style="left:0;top:0;width:1466px;height:1px;background:#d9d9d9"></div>
<div class="abs" style="left:0;top:19px;width:1466px;height:1px;background:#fff"></div>
<div class="abs" style="left:487px;top:2px;width:1px;height:17px;background:#d4d4d4"></div>
<div class="abs" style="left:975px;top:2px;width:1px;height:17px;background:#d4d4d4"></div>
<div class="abs" style="left:1463px;top:2px;width:1px;height:17px;background:#d4d4d4"></div>
<span style="left:2px;letter-spacing:-0.25px">Current Page No.: 1</span>
<span style="left:493px;letter-spacing:-0.18px">Total Page No.: 2</span>
<span style="left:980.5px;letter-spacing:-0.2px">Zoom Factor: 100%</span>
</div>
</body>
</html>
